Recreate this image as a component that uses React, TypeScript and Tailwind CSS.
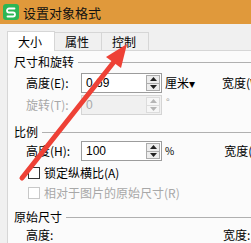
import React from "react";

const Spin = ({ disabled }: { disabled?: boolean }) => (
  <div
    className={`flex flex-col shrink-0 w-[14px] h-[16px] border ${
      disabled ? "border-[#dcdcdc] bg-[#f6f6f6]" : "border-[#acacac] bg-[#ededed]"
    }`}
  >
    <div
      className={`flex-1 flex items-center justify-center border-b ${
        disabled ? "border-[#dcdcdc]" : "border-[#acacac]"
      }`}
    >
      <svg width="7" height="4" viewBox="0 0 7 4">
        <path d="M0 4 L3.5 0 L7 4 Z" fill={disabled ? "#b5b5b5" : "#222"} />
      </svg>
    </div>
    <div className="flex-1 flex items-center justify-center">
      <svg width="7" height="4" viewBox="0 0 7 4">
        <path d="M0 0 L7 0 L3.5 4 Z" fill={disabled ? "#b5b5b5" : "#222"} />
      </svg>
    </div>
  </div>
);

const NumInput = ({ value, disabled }: { value: string; disabled?: boolean }) => (
  <div
    className={`flex shrink-0 items-center justify-between w-[81px] h-[20px] border pl-[4px] pr-[1px] ${
      disabled ? "border-[#d4d4d4] bg-[#f0f0f0] text-[#a8a8a8]" : "border-[#9c9c9c] bg-white text-black"
    }`}
  >
    <span className="font-['Liberation_Sans',sans-serif] text-[12px] leading-none">{value}</span>
    <Spin disabled={disabled} />
  </div>
);

const Heading = ({ title, className }: { title: string; className: string }) => (
  <div className={`flex items-center pl-[6px] ${className}`}>
    <span className="shrink-0 whitespace-nowrap text-[12px] leading-none text-black">{title}</span>
    <div className="flex-1 ml-[4px] h-px bg-[#b0b0b0]" />
  </div>
);

const Label = ({ children, className = "" }: { children: React.ReactNode; className?: string }) => (
  <span className={`shrink-0 whitespace-nowrap leading-none ${className}`}>{children}</span>
);

export default function App() {
  return (
    <div className="relative w-[251px] h-[243px] overflow-hidden bg-[#f0f0f0] font-['Noto_Sans_CJK_SC','Liberation_Sans',sans-serif]">
      {/* title bar */}
      <div className="flex items-center h-[24px] bg-[#e0993b] pl-[3px]">
        <svg width="16" height="16" viewBox="0 0 16 16">
          <rect x="0" y="0" width="16" height="16" rx="3" fill="#2db655" />
          <path
            d="M11.5 4.5 H6 a2 2 0 0 0 0 4 H10 a2 2 0 0 1 0 4 H4.5"
            stroke="#fff"
            strokeWidth="1.8"
            fill="none"
            strokeLinecap="round"
          />
        </svg>
        <span className="ml-[4px] text-[13px] leading-none text-[#111]">设置对象格式</span>
      </div>

      {/* tabs */}
      <div className="flex items-end h-[26px] pl-[7px]">
        <div className="w-[48px] h-[20px] bg-white border border-b-0 border-[#d6d6d6] pl-[10px] flex items-center text-[12px] text-black relative z-10 -mb-px">
          大小
        </div>
        <div className="w-[47px] h-[18px] border border-l-0 border-b-0 border-[#d6d6d6] pl-[10px] flex items-center text-[12px] text-black">
          属性
        </div>
        <div className="w-[47px] h-[18px] border border-l-0 border-b-0 border-[#d6d6d6] pl-[10px] flex items-center text-[12px] text-black">
          控制
        </div>
      </div>

      {/* panel */}
      <div className="ml-[7px] h-[200px] bg-[#fbfbfb] border-l border-t border-[#d6d6d6] flex flex-col text-[12px] text-black">
        <Heading title="尺寸和旋转" className="h-[20px] mt-[1px]" />

        <div className="flex items-center h-[20px] mt-[1px] pl-[18px]">
          <Label className="w-[55px]">高度(E):</Label>
          <NumInput value="0.69" />
          <Label className="ml-[3px]">厘米▾</Label>
          <Label className="ml-[27px]">宽度(W):</Label>
        </div>

        <div className="flex items-center h-[20px] mt-[2px] pl-[18px] text-[#a8a8a8]">
          <Label className="w-[55px]">旋转(T):</Label>
          <NumInput value="0" disabled />
          <Label className="ml-[4px] -mt-[6px] text-[10px]">°</Label>
        </div>

        <Heading title="比例" className="h-[16px] mt-[9px]" />

        <div className="flex items-center h-[20px] mt-[1px] pl-[18px]">
          <Label className="w-[55px]">高度(H):</Label>
          <NumInput value="100" />
          <Label className="ml-[3px] text-[10px]">%</Label>
          <Label className="ml-[50px]">宽度(W):</Label>
        </div>

        <div className="flex items-center h-[20px] mt-[2px] pl-[20px]">
          <div className="shrink-0 w-[12px] h-[12px] border border-[#333] bg-white" />
          <Label className="ml-[4px]">锁定纵横比(A)</Label>
        </div>

        <div className="flex items-center h-[20px] pl-[20px] text-[#a8a8a8]">
          <div className="shrink-0 w-[12px] h-[12px] border border-[#c8c8c8] bg-white" />
          <Label className="ml-[4px]">相对于图片的原始尺寸(R)</Label>
        </div>

        <Heading title="原始尺寸" className="h-[16px] mt-[6px]" />

        <div className="flex items-center h-[18px] mt-[1px] pl-[18px]">
          <Label className="w-[197px]">高度:</Label>
          <Label>宽度:</Label>
        </div>
      </div>

      {/* red annotation arrow */}
      <svg className="absolute left-0 top-0 pointer-events-none" width="251" height="243" viewBox="0 0 251 243">
        <line x1="22" y1="178" x2="117" y2="58" stroke="#ee4136" strokeWidth="5" strokeLinecap="round" />
        <path d="M127 44 L106 57 L121 68 Z" fill="#ee4136" />
      </svg>
    </div>
  );
}
